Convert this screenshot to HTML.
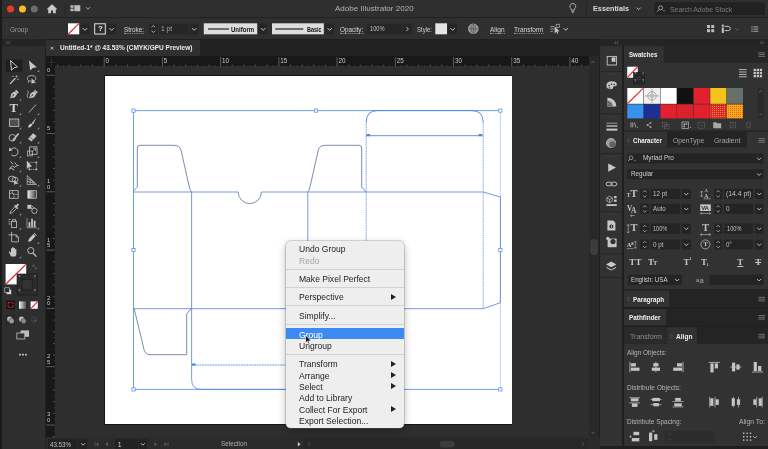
<!DOCTYPE html><html><head><meta charset="utf-8"><title>Adobe Illustrator 2020</title><style>
*{box-sizing:border-box;margin:0;padding:0}
html,body{width:768px;height:449px;overflow:hidden;background:#2f2f2f;}
body{position:relative;font-family:"Liberation Sans",sans-serif;font-size:6.5px;color:#d6d6d6;-webkit-font-smoothing:antialiased}
.a{position:absolute}
.t{position:absolute;white-space:nowrap;line-height:1;transform-origin:0 50%}
.u{border-bottom:1px dotted #9a9a9a}
svg{position:absolute;left:0;top:0;overflow:visible}
.f{position:absolute;background:#242424;border-radius:1.5px}
.mi{position:absolute;left:12.8px;white-space:nowrap;line-height:1;font-size:8.55px;color:#222;letter-spacing:0px}
.sep{position:absolute;left:0;right:0;height:1px;background:#d2d2d2}
.arr{position:absolute;left:105.2px;width:0;height:0;border-left:5px solid #222;border-top:3px solid transparent;border-bottom:3px solid transparent}
</style></head><body><div id="app" style="position:absolute;left:0;top:0;width:768px;height:449px;will-change:transform">
<div class="a" style="left:0px;top:0px;width:768px;height:17.2px;background:#2f2f2f;"></div>
<div class="a" style="left:0px;top:16.8px;width:768px;height:1.4px;background:#212121;"></div>
<div class="a" style="left:0px;top:18.2px;width:768px;height:20.4px;background:#2f2f2f;"></div>
<div class="a" style="left:0px;top:38.5px;width:768px;height:2px;background:#1e1e1e;"></div>
<div class="a" style="left:0px;top:0px;width:1.8px;height:449px;background:#1a1a1a;"></div>
<div class="a" style="left:46px;top:40.4px;width:554px;height:16px;background:#212121;"></div>
<div class="a" style="left:46px;top:40.4px;width:154px;height:16px;background:#303030;"></div>
<div class="a" style="left:46px;top:56.3px;width:554px;height:381px;background:#2e2e2e;"></div>
<div class="a" style="left:46px;top:56.3px;width:543px;height:10.2px;background:#181818;"></div>
<div class="a" style="left:45.6px;top:56.3px;width:9.4px;height:381.4px;background:#181818;"></div>
<div class="a" style="left:588.5px;top:56.3px;width:11.5px;height:381px;background:#282828;"></div>
<div class="a" style="left:589.5px;top:239px;width:8px;height:16px;background:#3c3c3c;border-radius:4px"></div>
<div class="a" style="left:46px;top:437.3px;width:554px;height:12px;background:#2b2b2b;"></div>
<div class="a" style="left:104px;top:75px;width:408.3px;height:350px;background:#161616;"></div>
<div class="a" style="left:104.9px;top:75.9px;width:407px;height:348.2px;background:#ffffff;"></div>
<svg width="768" height="449"><path d="M500.4 110.6 H133.5 V389.4 H500.4" fill="none" stroke="#4a86e6" stroke-width="0.8" /><path d="M500.4 110.6 V389.4" fill="none" stroke="#7fa6ea" stroke-width="0.8" stroke-dasharray="1.2 0.8"/><path d="M261.4 192 H483.2 L500.4 197 V302.7 L483.2 308.7 H133.5" fill="none" stroke="#5f86d2" stroke-width="0.85" /><path d="M133.5 192 H238.2" fill="none" stroke="#5f86d2" stroke-width="0.85" /><path d="M191.6 192 V308.7" fill="none" stroke="#5f86d2" stroke-width="0.85" /><path d="M307.8 192 V308.7" fill="none" stroke="#5f86d2" stroke-width="0.85" /><path d="M366.2 192 V308.7" fill="none" stroke="#6f94dc" stroke-width="0.9" stroke-dasharray="1.5 0.7"/><path d="M133.5 191 L137.3 187 V148 Q137.3 145.3 140 145.3 H173.5 Q179.6 145.3 181 150 L189.3 187 Q190.3 191 191.6 192" fill="none" stroke="#6f7fa8" stroke-width="0.9" /><path d="M238.2 192 A11.6 11.6 0 0 0 261.4 192" fill="none" stroke="#6f7fa8" stroke-width="0.9" /><path d="M307.8 192 Q309 191 310 187 L318.3 150 Q319.6 145.3 325.4 145.3 H359 Q361.7 145.3 361.7 148 V187 L366.2 192" fill="none" stroke="#6f7fa8" stroke-width="0.9" /><path d="M366.2 122.5 Q366.2 110.6 377.5 110.6 H472 Q483.2 110.6 483.2 122.5" fill="none" stroke="#4a86e6" stroke-width="0.95" /><path d="M366.2 135.7 H483.2" fill="none" stroke="#5f86d2" stroke-width="0.9" /><path d="M366.2 192 V122.5" fill="none" stroke="#6f94dc" stroke-width="0.9" stroke-dasharray="1.5 0.7"/><path d="M483.2 122.5 V308.7" fill="none" stroke="#7d9fe2" stroke-width="0.9" stroke-dasharray="1.5 0.7"/><path d="M134.2 308.7 L144 349.5 Q145.5 354.7 150 354.7 H186.7 V314 L191.1 308.7" fill="none" stroke="#6f7fa8" stroke-width="0.9" /><path d="M191.6 308.7 V379.3 Q191.6 389.4 201.7 389.4 H300" fill="none" stroke="#4a86e6" stroke-width="0.8" /><path d="M191.6 365 H300" fill="none" stroke="#4a86e6" stroke-width="0.8" stroke-dasharray="2 0.6"/><rect x="366.7" y="134" width="3.4" height="2.2" fill="#4a86e6"/><rect x="478.7" y="134" width="3.4" height="2.2" fill="#4a86e6"/><rect x="192.1" y="363.4" width="3.4" height="2.2" fill="#4a86e6"/><rect x="131.9" y="109.0" width="3.2" height="3.2" fill="#fff" stroke="#4a86e6" stroke-width="0.7"/><rect x="314.4" y="109.0" width="3.2" height="3.2" fill="#fff" stroke="#4a86e6" stroke-width="0.7"/><rect x="498.79999999999995" y="109.0" width="3.2" height="3.2" fill="#fff" stroke="#4a86e6" stroke-width="0.7"/><rect x="131.9" y="248.4" width="3.2" height="3.2" fill="#fff" stroke="#4a86e6" stroke-width="0.7"/><rect x="498.79999999999995" y="248.4" width="3.2" height="3.2" fill="#fff" stroke="#4a86e6" stroke-width="0.7"/><rect x="131.9" y="387.79999999999995" width="3.2" height="3.2" fill="#fff" stroke="#4a86e6" stroke-width="0.7"/><rect x="498.79999999999995" y="387.79999999999995" width="3.2" height="3.2" fill="#fff" stroke="#4a86e6" stroke-width="0.7"/></svg>
<svg width="768" height="449"><path d="M57.62 64.6 V66.5" stroke="#8a8a8a" stroke-width="0.5"/><path d="M63.45 65.5 V66.5" stroke="#6a6a6a" stroke-width="0.5"/><path d="M69.27 64.6 V66.5" stroke="#8a8a8a" stroke-width="0.5"/><path d="M75.09 65.5 V66.5" stroke="#6a6a6a" stroke-width="0.5"/><path d="M80.91 64.6 V66.5" stroke="#8a8a8a" stroke-width="0.5"/><path d="M86.73 65.5 V66.5" stroke="#6a6a6a" stroke-width="0.5"/><path d="M92.56 64.6 V66.5" stroke="#8a8a8a" stroke-width="0.5"/><path d="M98.38 65.5 V66.5" stroke="#6a6a6a" stroke-width="0.5"/><path d="M104.20 57 V66.5" stroke="#8a8a8a" stroke-width="0.6"/><text x="105.60" y="63" font-size="6.3" fill="#c8c8c8" font-family="Liberation Sans, sans-serif">0</text><path d="M110.02 65.5 V66.5" stroke="#6a6a6a" stroke-width="0.5"/><path d="M115.84 64.6 V66.5" stroke="#8a8a8a" stroke-width="0.5"/><path d="M121.67 65.5 V66.5" stroke="#6a6a6a" stroke-width="0.5"/><path d="M127.49 64.6 V66.5" stroke="#8a8a8a" stroke-width="0.5"/><path d="M133.31 65.5 V66.5" stroke="#6a6a6a" stroke-width="0.5"/><path d="M139.13 64.6 V66.5" stroke="#8a8a8a" stroke-width="0.5"/><path d="M144.95 65.5 V66.5" stroke="#6a6a6a" stroke-width="0.5"/><path d="M150.78 64.6 V66.5" stroke="#8a8a8a" stroke-width="0.5"/><path d="M156.60 65.5 V66.5" stroke="#6a6a6a" stroke-width="0.5"/><path d="M162.42 57 V66.5" stroke="#8a8a8a" stroke-width="0.6"/><text x="163.82" y="63" font-size="6.3" fill="#c8c8c8" font-family="Liberation Sans, sans-serif">5</text><path d="M168.24 65.5 V66.5" stroke="#6a6a6a" stroke-width="0.5"/><path d="M174.06 64.6 V66.5" stroke="#8a8a8a" stroke-width="0.5"/><path d="M179.89 65.5 V66.5" stroke="#6a6a6a" stroke-width="0.5"/><path d="M185.71 64.6 V66.5" stroke="#8a8a8a" stroke-width="0.5"/><path d="M191.53 65.5 V66.5" stroke="#6a6a6a" stroke-width="0.5"/><path d="M197.35 64.6 V66.5" stroke="#8a8a8a" stroke-width="0.5"/><path d="M203.17 65.5 V66.5" stroke="#6a6a6a" stroke-width="0.5"/><path d="M209.00 64.6 V66.5" stroke="#8a8a8a" stroke-width="0.5"/><path d="M214.82 65.5 V66.5" stroke="#6a6a6a" stroke-width="0.5"/><path d="M220.64 57 V66.5" stroke="#8a8a8a" stroke-width="0.6"/><text x="222.04" y="63" font-size="6.3" fill="#c8c8c8" font-family="Liberation Sans, sans-serif">10</text><path d="M226.46 65.5 V66.5" stroke="#6a6a6a" stroke-width="0.5"/><path d="M232.28 64.6 V66.5" stroke="#8a8a8a" stroke-width="0.5"/><path d="M238.11 65.5 V66.5" stroke="#6a6a6a" stroke-width="0.5"/><path d="M243.93 64.6 V66.5" stroke="#8a8a8a" stroke-width="0.5"/><path d="M249.75 65.5 V66.5" stroke="#6a6a6a" stroke-width="0.5"/><path d="M255.57 64.6 V66.5" stroke="#8a8a8a" stroke-width="0.5"/><path d="M261.39 65.5 V66.5" stroke="#6a6a6a" stroke-width="0.5"/><path d="M267.22 64.6 V66.5" stroke="#8a8a8a" stroke-width="0.5"/><path d="M273.04 65.5 V66.5" stroke="#6a6a6a" stroke-width="0.5"/><path d="M278.86 57 V66.5" stroke="#8a8a8a" stroke-width="0.6"/><text x="280.26" y="63" font-size="6.3" fill="#c8c8c8" font-family="Liberation Sans, sans-serif">15</text><path d="M284.68 65.5 V66.5" stroke="#6a6a6a" stroke-width="0.5"/><path d="M290.50 64.6 V66.5" stroke="#8a8a8a" stroke-width="0.5"/><path d="M296.33 65.5 V66.5" stroke="#6a6a6a" stroke-width="0.5"/><path d="M302.15 64.6 V66.5" stroke="#8a8a8a" stroke-width="0.5"/><path d="M307.97 65.5 V66.5" stroke="#6a6a6a" stroke-width="0.5"/><path d="M313.79 64.6 V66.5" stroke="#8a8a8a" stroke-width="0.5"/><path d="M319.61 65.5 V66.5" stroke="#6a6a6a" stroke-width="0.5"/><path d="M325.44 64.6 V66.5" stroke="#8a8a8a" stroke-width="0.5"/><path d="M331.26 65.5 V66.5" stroke="#6a6a6a" stroke-width="0.5"/><path d="M337.08 57 V66.5" stroke="#8a8a8a" stroke-width="0.6"/><text x="338.48" y="63" font-size="6.3" fill="#c8c8c8" font-family="Liberation Sans, sans-serif">20</text><path d="M342.90 65.5 V66.5" stroke="#6a6a6a" stroke-width="0.5"/><path d="M348.72 64.6 V66.5" stroke="#8a8a8a" stroke-width="0.5"/><path d="M354.55 65.5 V66.5" stroke="#6a6a6a" stroke-width="0.5"/><path d="M360.37 64.6 V66.5" stroke="#8a8a8a" stroke-width="0.5"/><path d="M366.19 65.5 V66.5" stroke="#6a6a6a" stroke-width="0.5"/><path d="M372.01 64.6 V66.5" stroke="#8a8a8a" stroke-width="0.5"/><path d="M377.83 65.5 V66.5" stroke="#6a6a6a" stroke-width="0.5"/><path d="M383.66 64.6 V66.5" stroke="#8a8a8a" stroke-width="0.5"/><path d="M389.48 65.5 V66.5" stroke="#6a6a6a" stroke-width="0.5"/><path d="M395.30 57 V66.5" stroke="#8a8a8a" stroke-width="0.6"/><text x="396.70" y="63" font-size="6.3" fill="#c8c8c8" font-family="Liberation Sans, sans-serif">25</text><path d="M401.12 65.5 V66.5" stroke="#6a6a6a" stroke-width="0.5"/><path d="M406.94 64.6 V66.5" stroke="#8a8a8a" stroke-width="0.5"/><path d="M412.77 65.5 V66.5" stroke="#6a6a6a" stroke-width="0.5"/><path d="M418.59 64.6 V66.5" stroke="#8a8a8a" stroke-width="0.5"/><path d="M424.41 65.5 V66.5" stroke="#6a6a6a" stroke-width="0.5"/><path d="M430.23 64.6 V66.5" stroke="#8a8a8a" stroke-width="0.5"/><path d="M436.05 65.5 V66.5" stroke="#6a6a6a" stroke-width="0.5"/><path d="M441.88 64.6 V66.5" stroke="#8a8a8a" stroke-width="0.5"/><path d="M447.70 65.5 V66.5" stroke="#6a6a6a" stroke-width="0.5"/><path d="M453.52 57 V66.5" stroke="#8a8a8a" stroke-width="0.6"/><text x="454.92" y="63" font-size="6.3" fill="#c8c8c8" font-family="Liberation Sans, sans-serif">30</text><path d="M459.34 65.5 V66.5" stroke="#6a6a6a" stroke-width="0.5"/><path d="M465.16 64.6 V66.5" stroke="#8a8a8a" stroke-width="0.5"/><path d="M470.99 65.5 V66.5" stroke="#6a6a6a" stroke-width="0.5"/><path d="M476.81 64.6 V66.5" stroke="#8a8a8a" stroke-width="0.5"/><path d="M482.63 65.5 V66.5" stroke="#6a6a6a" stroke-width="0.5"/><path d="M488.45 64.6 V66.5" stroke="#8a8a8a" stroke-width="0.5"/><path d="M494.27 65.5 V66.5" stroke="#6a6a6a" stroke-width="0.5"/><path d="M500.10 64.6 V66.5" stroke="#8a8a8a" stroke-width="0.5"/><path d="M505.92 65.5 V66.5" stroke="#6a6a6a" stroke-width="0.5"/><path d="M511.74 57 V66.5" stroke="#8a8a8a" stroke-width="0.6"/><text x="513.14" y="63" font-size="6.3" fill="#c8c8c8" font-family="Liberation Sans, sans-serif">35</text><path d="M517.56 65.5 V66.5" stroke="#6a6a6a" stroke-width="0.5"/><path d="M523.38 64.6 V66.5" stroke="#8a8a8a" stroke-width="0.5"/><path d="M529.21 65.5 V66.5" stroke="#6a6a6a" stroke-width="0.5"/><path d="M535.03 64.6 V66.5" stroke="#8a8a8a" stroke-width="0.5"/><path d="M540.85 65.5 V66.5" stroke="#6a6a6a" stroke-width="0.5"/><path d="M546.67 64.6 V66.5" stroke="#8a8a8a" stroke-width="0.5"/><path d="M552.49 65.5 V66.5" stroke="#6a6a6a" stroke-width="0.5"/><path d="M558.32 64.6 V66.5" stroke="#8a8a8a" stroke-width="0.5"/><path d="M564.14 65.5 V66.5" stroke="#6a6a6a" stroke-width="0.5"/><path d="M569.96 57 V66.5" stroke="#8a8a8a" stroke-width="0.6"/><text x="571.36" y="63" font-size="6.3" fill="#c8c8c8" font-family="Liberation Sans, sans-serif">40</text><path d="M575.78 65.5 V66.5" stroke="#6a6a6a" stroke-width="0.5"/><path d="M581.60 64.6 V66.5" stroke="#8a8a8a" stroke-width="0.5"/><path d="M587.43 65.5 V66.5" stroke="#6a6a6a" stroke-width="0.5"/><path d="M53.9 69.37 H54.8" stroke="#6a6a6a" stroke-width="0.5"/><path d="M46.5 75.20 H54.8" stroke="#8a8a8a" stroke-width="0.6"/><text x="46.9" y="72.00" font-size="5.9" fill="#c8c8c8" font-family="Liberation Sans, sans-serif">0</text><path d="M53.9 81.03 H54.8" stroke="#6a6a6a" stroke-width="0.5"/><path d="M53 86.86 H54.8" stroke="#8a8a8a" stroke-width="0.5"/><path d="M53.9 92.69 H54.8" stroke="#6a6a6a" stroke-width="0.5"/><path d="M53 98.52 H54.8" stroke="#8a8a8a" stroke-width="0.5"/><path d="M53.9 104.35 H54.8" stroke="#6a6a6a" stroke-width="0.5"/><path d="M53 110.18 H54.8" stroke="#8a8a8a" stroke-width="0.5"/><path d="M53.9 116.01 H54.8" stroke="#6a6a6a" stroke-width="0.5"/><path d="M53 121.84 H54.8" stroke="#8a8a8a" stroke-width="0.5"/><path d="M53.9 127.67 H54.8" stroke="#6a6a6a" stroke-width="0.5"/><path d="M46.5 133.50 H54.8" stroke="#8a8a8a" stroke-width="0.6"/><text x="46.9" y="130.30" font-size="5.9" fill="#c8c8c8" font-family="Liberation Sans, sans-serif">5</text><path d="M53.9 139.33 H54.8" stroke="#6a6a6a" stroke-width="0.5"/><path d="M53 145.16 H54.8" stroke="#8a8a8a" stroke-width="0.5"/><path d="M53.9 150.99 H54.8" stroke="#6a6a6a" stroke-width="0.5"/><path d="M53 156.82 H54.8" stroke="#8a8a8a" stroke-width="0.5"/><path d="M53.9 162.65 H54.8" stroke="#6a6a6a" stroke-width="0.5"/><path d="M53 168.48 H54.8" stroke="#8a8a8a" stroke-width="0.5"/><path d="M53.9 174.31 H54.8" stroke="#6a6a6a" stroke-width="0.5"/><path d="M53 180.14 H54.8" stroke="#8a8a8a" stroke-width="0.5"/><path d="M53.9 185.97 H54.8" stroke="#6a6a6a" stroke-width="0.5"/><path d="M46.5 191.80 H54.8" stroke="#8a8a8a" stroke-width="0.6"/><text x="46.9" y="183.20" font-size="5.9" fill="#c8c8c8" font-family="Liberation Sans, sans-serif">1</text><text x="46.9" y="188.60" font-size="5.9" fill="#c8c8c8" font-family="Liberation Sans, sans-serif">0</text><path d="M53.9 197.63 H54.8" stroke="#6a6a6a" stroke-width="0.5"/><path d="M53 203.46 H54.8" stroke="#8a8a8a" stroke-width="0.5"/><path d="M53.9 209.29 H54.8" stroke="#6a6a6a" stroke-width="0.5"/><path d="M53 215.12 H54.8" stroke="#8a8a8a" stroke-width="0.5"/><path d="M53.9 220.95 H54.8" stroke="#6a6a6a" stroke-width="0.5"/><path d="M53 226.78 H54.8" stroke="#8a8a8a" stroke-width="0.5"/><path d="M53.9 232.61 H54.8" stroke="#6a6a6a" stroke-width="0.5"/><path d="M53 238.44 H54.8" stroke="#8a8a8a" stroke-width="0.5"/><path d="M53.9 244.27 H54.8" stroke="#6a6a6a" stroke-width="0.5"/><path d="M46.5 250.10 H54.8" stroke="#8a8a8a" stroke-width="0.6"/><text x="46.9" y="241.50" font-size="5.9" fill="#c8c8c8" font-family="Liberation Sans, sans-serif">1</text><text x="46.9" y="246.90" font-size="5.9" fill="#c8c8c8" font-family="Liberation Sans, sans-serif">5</text><path d="M53.9 255.93 H54.8" stroke="#6a6a6a" stroke-width="0.5"/><path d="M53 261.76 H54.8" stroke="#8a8a8a" stroke-width="0.5"/><path d="M53.9 267.59 H54.8" stroke="#6a6a6a" stroke-width="0.5"/><path d="M53 273.42 H54.8" stroke="#8a8a8a" stroke-width="0.5"/><path d="M53.9 279.25 H54.8" stroke="#6a6a6a" stroke-width="0.5"/><path d="M53 285.08 H54.8" stroke="#8a8a8a" stroke-width="0.5"/><path d="M53.9 290.91 H54.8" stroke="#6a6a6a" stroke-width="0.5"/><path d="M53 296.74 H54.8" stroke="#8a8a8a" stroke-width="0.5"/><path d="M53.9 302.57 H54.8" stroke="#6a6a6a" stroke-width="0.5"/><path d="M46.5 308.40 H54.8" stroke="#8a8a8a" stroke-width="0.6"/><text x="46.9" y="299.80" font-size="5.9" fill="#c8c8c8" font-family="Liberation Sans, sans-serif">2</text><text x="46.9" y="305.20" font-size="5.9" fill="#c8c8c8" font-family="Liberation Sans, sans-serif">0</text><path d="M53.9 314.23 H54.8" stroke="#6a6a6a" stroke-width="0.5"/><path d="M53 320.06 H54.8" stroke="#8a8a8a" stroke-width="0.5"/><path d="M53.9 325.89 H54.8" stroke="#6a6a6a" stroke-width="0.5"/><path d="M53 331.72 H54.8" stroke="#8a8a8a" stroke-width="0.5"/><path d="M53.9 337.55 H54.8" stroke="#6a6a6a" stroke-width="0.5"/><path d="M53 343.38 H54.8" stroke="#8a8a8a" stroke-width="0.5"/><path d="M53.9 349.21 H54.8" stroke="#6a6a6a" stroke-width="0.5"/><path d="M53 355.04 H54.8" stroke="#8a8a8a" stroke-width="0.5"/><path d="M53.9 360.87 H54.8" stroke="#6a6a6a" stroke-width="0.5"/><path d="M46.5 366.70 H54.8" stroke="#8a8a8a" stroke-width="0.6"/><text x="46.9" y="358.10" font-size="5.9" fill="#c8c8c8" font-family="Liberation Sans, sans-serif">2</text><text x="46.9" y="363.50" font-size="5.9" fill="#c8c8c8" font-family="Liberation Sans, sans-serif">5</text><path d="M53.9 372.53 H54.8" stroke="#6a6a6a" stroke-width="0.5"/><path d="M53 378.36 H54.8" stroke="#8a8a8a" stroke-width="0.5"/><path d="M53.9 384.19 H54.8" stroke="#6a6a6a" stroke-width="0.5"/><path d="M53 390.02 H54.8" stroke="#8a8a8a" stroke-width="0.5"/><path d="M53.9 395.85 H54.8" stroke="#6a6a6a" stroke-width="0.5"/><path d="M53 401.68 H54.8" stroke="#8a8a8a" stroke-width="0.5"/><path d="M53.9 407.51 H54.8" stroke="#6a6a6a" stroke-width="0.5"/><path d="M53 413.34 H54.8" stroke="#8a8a8a" stroke-width="0.5"/><path d="M53.9 419.17 H54.8" stroke="#6a6a6a" stroke-width="0.5"/><path d="M46.5 425.00 H54.8" stroke="#8a8a8a" stroke-width="0.6"/><text x="46.9" y="416.40" font-size="5.9" fill="#c8c8c8" font-family="Liberation Sans, sans-serif">3</text><text x="46.9" y="421.80" font-size="5.9" fill="#c8c8c8" font-family="Liberation Sans, sans-serif">0</text><path d="M53.9 430.83 H54.8" stroke="#6a6a6a" stroke-width="0.5"/><path d="M53 436.66 H54.8" stroke="#8a8a8a" stroke-width="0.5"/><rect x="45.6" y="56.3" width="9.4" height="10.2" fill="#181818"/><path d="M47.5 62.3 H54.8 M51.6 57.5 V66.5" stroke="#6e6e6e" stroke-width="0.5" stroke-dasharray="0.8 0.8"/></svg>
<svg width="768" height="449"><circle cx="10.5" cy="9.1" r="3.5" fill="#e8392c"/><circle cx="22.5" cy="9.1" r="3.5" fill="#f5bf1f"/><circle cx="34.3" cy="9.1" r="3.5" fill="#66706a"/><path d="M52 4.2 L46.6 9.3 H48.2 V13.2 H51 V10.4 H53 V13.2 H55.8 V9.3 H57.4 Z" fill="#c9c9c9"/><rect x="64.6" y="3" width="0.8" height="12" fill="#262626"/><rect x="70.5" y="5.2" width="3" height="2.6" fill="#bdbdbd"/><rect x="70.5" y="8.6" width="3" height="2.6" fill="#bdbdbd"/><rect x="74.3" y="5.2" width="6" height="6" fill="#bdbdbd"/><path d="M86 7.2 L88 9.2 L90 7.2" fill="none" stroke="#bdbdbd" stroke-width="0.9"/><path d="M572.8 3.4 a3 3 0 0 1 1.6 5.5 v1.2 h-3.2 v-1.2 a3 3 0 0 1 1.6 -5.5 Z M571.5 11.3 h2.6 M571.9 12.6 h1.8" fill="none" stroke="#c4c4c4" stroke-width="0.8"/><rect x="586" y="2.5" width="0.8" height="12.5" fill="#222"/><path d="M636.5 7.6 L638.6 9.7 L640.7 7.6" fill="none" stroke="#c4c4c4" stroke-width="0.9"/><rect x="654.3" y="2.3" width="110.7" height="12.6" rx="2" fill="#222222"/><circle cx="660.6" cy="7.8" r="2" fill="none" stroke="#b8b8b8" stroke-width="0.8"/><path d="M659.2 9.4 L657.2 11.6" stroke="#b8b8b8" stroke-width="0.9"/><path d="M663 10.2 l1 1 l1 -1" fill="none" stroke="#b8b8b8" stroke-width="0.6"/></svg>
<div class="t " style="left:335px;top:5.20px;font-size:7.6px;color:#b4b4b4;font-weight:normal;transform:scaleX(1.058);">Adobe Illustrator 2020</div>
<div class="t " style="left:593px;top:5.05px;font-size:7.5px;color:#dcdcdc;font-weight:bold;transform:scaleX(0.970);">Essentials</div>
<div class="t " style="left:669.8px;top:5.50px;font-size:7.4px;color:#7e7e7e;font-weight:normal;transform:scaleX(0.928);">Search Adobe Stock</div>
<svg width="768" height="449"><path d="M6.7 22 V36" stroke="#444" stroke-width="1" stroke-dasharray="0.8 0.8"/><rect x="68" y="23.3" width="11.2" height="11" fill="#fff"/><path d="M68.4 34 L78.8 23.6" stroke="#e0262a" stroke-width="1.2"/><rect x="80.5" y="23.5" width="8.7" height="10.7" fill="#262626"/><rect x="94.7" y="23.8" width="10.6" height="10.2" fill="#2a2a2a" stroke="#e4e4e4" stroke-width="1"/><rect x="107.5" y="23.5" width="8.3" height="10.7" fill="#262626"/><rect x="149.2" y="23.6" width="8.6" height="10.6" fill="#262626"/><rect x="159.2" y="23.6" width="29.2" height="10.6" fill="#262626"/><rect x="190" y="23.6" width="8.4" height="10.6" fill="#262626"/><path d="M151.6 27.4 L153.4 25.4 L155.2 27.4 M151.6 30.6 L153.4 32.6 L155.2 30.6" fill="none" stroke="#c0c0c0" stroke-width="0.8"/><rect x="203.8" y="23.3" width="53.4" height="11" fill="#dedede"/><path d="M208 29 H229" stroke="#111" stroke-width="1.1"/><rect x="258.8" y="23.5" width="8.7" height="10.7" fill="#262626"/><rect x="272" y="23.3" width="51.8" height="11" fill="#dedede"/><path d="M275.3 29 H303.3" stroke="#111" stroke-width="1.1"/><rect x="325.5" y="23.5" width="8.4" height="10.7" fill="#262626"/><rect x="367" y="23.6" width="34.7" height="10.6" fill="#262626"/><rect x="402.8" y="23.6" width="9.2" height="10.6" fill="#262626"/><path d="M406.4 27 L408.4 29 L406.4 31" fill="none" stroke="#c8c8c8" stroke-width="0.9"/><rect x="435.3" y="23.3" width="11.7" height="11" fill="#e4e4e4"/><rect x="448.3" y="23.5" width="8.7" height="10.7" fill="#262626"/><circle cx="473.3" cy="28.8" r="4.8" fill="#8f8f8f" stroke="#cfcfcf" stroke-width="0.7"/><path d="M473.3 24 V33.6 M468.5 28.8 H478.1" stroke="#444" stroke-width="0.5"/><ellipse cx="473.3" cy="28.8" rx="2.2" ry="4.8" fill="none" stroke="#444" stroke-width="0.5"/><path d="M550.4 26.6 h3.6 M550.4 29 h3.6 M550.4 31.4 h2.4" stroke="#c4c4c4" stroke-width="0.7"/><path d="M554.6 26.6 L554.6 33.4 L556.4 31.8 L557.6 34 L558.4 33.6 L557.4 31.4 L559.6 31.2 Z" fill="#c4c4c4"/><rect x="556.2" y="24.2" width="3.2" height="3.2" fill="none" stroke="#c4c4c4" stroke-width="0.6"/><g fill="#bdbdbd"><rect x="707" y="25" width="3" height="3"/><rect x="711.2" y="25" width="3" height="3"/><rect x="707" y="29.2" width="3" height="3"/><rect x="711.2" y="29.2" width="3" height="3"/></g><rect x="721.8" y="24.6" width="2" height="2" fill="#c4c4c4"/><rect x="721.8" y="27.4" width="2" height="5.6" fill="#c4c4c4"/><path d="M724.6 26.4 h3.6 a2 2 0 0 1 0 4.2 h-3.6" fill="none" stroke="#c4c4c4" stroke-width="1"/><g fill="#8a8a8a"><rect x="751.3" y="26.3" width="1.5" height="1.3"/><rect x="753.4" y="26.3" width="4.9" height="1.3"/><rect x="751.3" y="28.5" width="1.5" height="1.3"/><rect x="753.4" y="28.5" width="4.9" height="1.3"/><rect x="751.3" y="30.7" width="1.5" height="1.3"/><rect x="753.4" y="30.7" width="4.9" height="1.3"/></g></svg>
<div class="t " style="left:10px;top:25.50px;font-size:7px;color:#9c9c9c;font-weight:normal;transform:scaleX(0.925);">Group</div>
<div class="t " style="left:98px;top:25.20px;font-size:8px;color:#f0f0f0;font-weight:bold;">?</div>
<svg width="768" height="449"><path d="M82.7 28.099999999999998 L84.9 30.3 L87.10000000000001 28.099999999999998" fill="none" stroke="#c8c8c8" stroke-width="1"/></svg>
<svg width="768" height="449"><path d="M109.39999999999999 28.099999999999998 L111.6 30.3 L113.8 28.099999999999998" fill="none" stroke="#c8c8c8" stroke-width="1"/></svg>
<div class="t u" style="left:124.2px;top:25.50px;font-size:7px;color:#d8d8d8;font-weight:normal;transform:scaleX(0.902);">Stroke:</div>
<div class="t " style="left:161.3px;top:25.90px;font-size:6.8px;color:#a8a8a8;font-weight:normal;transform:scaleX(0.987);">1 pt</div>
<svg width="768" height="449"><path d="M192.0 28.099999999999998 L194.2 30.3 L196.39999999999998 28.099999999999998" fill="none" stroke="#c8c8c8" stroke-width="1"/></svg>
<div class="t " style="left:230.8px;top:25.60px;font-size:7px;color:#111;font-weight:bold;transform:scaleX(0.865);">Uniform</div>
<svg width="768" height="449"><path d="M261.0 28.099999999999998 L263.2 30.3 L265.4 28.099999999999998" fill="none" stroke="#c8c8c8" stroke-width="1"/></svg>
<div class="t " style="left:306.7px;top:25.60px;font-size:7px;color:#111;font-weight:bold;transform:scaleX(0.776);">Basic</div>
<svg width="768" height="449"><path d="M327.5 28.099999999999998 L329.7 30.3 L331.9 28.099999999999998" fill="none" stroke="#c8c8c8" stroke-width="1"/></svg>
<div class="t u" style="left:339.5px;top:25.50px;font-size:7px;color:#d8d8d8;font-weight:normal;transform:scaleX(0.907);">Opacity:</div>
<div class="t " style="left:369.7px;top:25.90px;font-size:6.8px;color:#c4c4c4;font-weight:normal;transform:scaleX(0.834);">100%</div>
<div class="t " style="left:416.7px;top:25.50px;font-size:7px;color:#c8c8c8;font-weight:normal;transform:scaleX(0.857);">Style:</div>
<svg width="768" height="449"><path d="M450.5 28.099999999999998 L452.7 30.3 L454.9 28.099999999999998" fill="none" stroke="#c8c8c8" stroke-width="1"/></svg>
<div class="t u" style="left:489.7px;top:25.50px;font-size:7px;color:#d8d8d8;font-weight:normal;transform:scaleX(0.932);">Align</div>
<div class="t u" style="left:513.8px;top:25.50px;font-size:7px;color:#d8d8d8;font-weight:normal;transform:scaleX(0.933);">Transform</div>
<svg width="768" height="449"><path d="M563.5999999999999 28.099999999999998 L565.8 30.3 L568.0 28.099999999999998" fill="none" stroke="#c8c8c8" stroke-width="1"/></svg>
<svg width="768" height="449"><path d="M735.0 28.099999999999998 L737.2 30.3 L739.4000000000001 28.099999999999998" fill="none" stroke="#5a5a5a" stroke-width="1"/></svg>
<svg width="768" height="449"><path d="M50.6 46.8 L53.4 49.6 M53.4 46.8 L50.6 49.6" stroke="#d0d0d0" stroke-width="0.8"/></svg>
<div class="t " style="left:60px;top:44.85px;font-size:7.1px;color:#ececec;font-weight:bold;transform:scaleX(0.919);">Untitled-1* @ 43.53% (CMYK/GPU Preview)</div>
<div class="a" style="left:2.2px;top:38.5px;width:43.8px;height:411px;background:#2e2e2e;"></div>
<div class="a" style="left:2.2px;top:38.5px;width:43.8px;height:7.3px;background:#242424;"></div>
<div class="a" style="left:45.3px;top:38.5px;width:0.9px;height:411px;background:#212121;"></div>
<svg width="768" height="449"><path d="M7.6 41.2 L6.2 42.6 L7.6 44 M9.8 41.2 L8.4 42.6 L9.8 44" fill="none" stroke="#8a8a8a" stroke-width="0.6"/><path d="M18 49.5 H30" stroke="#3e3e3e" stroke-width="1.2" stroke-dasharray="0.8 0.8"/><rect x="5.8" y="59.5" width="16.6" height="12.2" fill="#1f1f1f" rx="1"/><path d="M10.5 60.5 L11.5 70.3 L13.9 67.9 L17.4 66.9 Z" fill="none" stroke="#e0e0e0" stroke-width="0.9" stroke-linejoin="round"/><path d="M28.9 60.5 L30.2 70.5 L32.8 68.1 L36.8 67.3 Z" fill="#c6c6c6"/><path d="M39.2 71.9 h-2 l2 -2 Z" fill="#9a9a9a"/><path d="M10 83.83 L15.4 78.23" stroke="#c6c6c6" stroke-width="1.3"/><path d="M16.6 75.23 v2.4 M15.4 76.42999999999999 h2.4 M13 75.83 v1.2 M12.4 76.42999999999999 h1.2 M17.4 79.23 h1.2 M18 78.63 v1.2" stroke="#c6c6c6" stroke-width="0.6"/><ellipse cx="31.6" cy="78.42999999999999" rx="4.2" ry="2.8" fill="none" stroke="#c6c6c6" stroke-width="0.8"/><path d="M28.6 80.42999999999999 q-1.2 1.6 0.4 2.6" fill="none" stroke="#c6c6c6" stroke-width="0.7"/><path d="M31.6 78.23 L31.6 84.23 L33.2 82.83 L36 83.23 Z" fill="#c6c6c6"/><path d="M10 98.56 L11.4 93.56 L15 91.16 L17.4 93.56 L15 97.16 Z" fill="#c6c6c6"/><path d="M15.6 90.36 L18.2 92.96" stroke="#c6c6c6" stroke-width="1.6"/><circle cx="13.4" cy="94.96" r="0.8" fill="#323232"/><path d="M10 98.56 L13.2 95.16" stroke="#323232" stroke-width="0.5"/><path d="M21.2 100.56 h-2 l2 -2 Z" fill="#9a9a9a"/><path d="M29 98.56 L30.4 93.56 L34 91.16 L36.4 93.56 L34 97.16 Z" fill="#c6c6c6"/><path d="M34.6 90.36 L37.2 92.96" stroke="#c6c6c6" stroke-width="1.6"/><circle cx="32.4" cy="94.96" r="0.8" fill="#323232"/><path d="M29 98.56 L32.2 95.16" stroke="#323232" stroke-width="0.5"/><path d="M27.6 90.56 q1.6 2 0 3.6 q-1.4 1.8 0.6 3.6" fill="none" stroke="#c6c6c6" stroke-width="0.7"/><path d="M29 112.49000000000001 L36 104.49000000000001" stroke="#c6c6c6" stroke-width="0.8"/><path d="M39.2 114.89000000000001 h-2 l2 -2 Z" fill="#9a9a9a"/><path d="M21.2 114.89000000000001 h-2 l2 -2 Z" fill="#9a9a9a"/><rect x="9.4" y="119.02" width="9.4" height="7.4" fill="#505050" stroke="#c6c6c6" stroke-width="0.8"/><path d="M21.2 129.22 h-2 l2 -2 Z" fill="#9a9a9a"/><path d="M36.4 117.82 L31.6 123.22 L33 124.41999999999999 Z" fill="#c6c6c6"/><path d="M31.2 123.61999999999999 q-2.8 0.6 -3 4 q3 0.2 4.2 -2.8 Z" fill="#c6c6c6"/><path d="M39.2 129.22 h-2 l2 -2 Z" fill="#9a9a9a"/><circle cx="12.4" cy="137.75" r="3.3" fill="none" stroke="#c6c6c6" stroke-width="0.8"/><path d="M12.6 140.75 L18.6 133.55" stroke="#c6c6c6" stroke-width="1.6"/><path d="M21.2 143.55 h-2 l2 -2 Z" fill="#9a9a9a"/><path d="M28 138.75 L33 133.15 L36.6 135.95000000000002 L31.6 141.55 Z" fill="#c6c6c6"/><path d="M29.6 136.95000000000002 L33.2 139.75" stroke="#323232" stroke-width="0.6"/><path d="M39.2 143.55 h-2 l2 -2 Z" fill="#9a9a9a"/><path d="M10.6 149.88000000000002 A4 4 0 1 1 11.4 154.88000000000002" fill="none" stroke="#c6c6c6" stroke-width="0.9"/><path d="M9.2 147.48000000000002 L12.6 150.28000000000003 L9 151.28000000000003 Z" fill="#c6c6c6"/><path d="M21.2 157.88000000000002 h-2 l2 -2 Z" fill="#9a9a9a"/><rect x="27.6" y="151.08" width="4.8" height="4.8" fill="none" stroke="#c6c6c6" stroke-width="0.7"/><rect x="29.6" y="146.88000000000002" width="7.4" height="7.4" fill="none" stroke="#c6c6c6" stroke-width="0.8"/><path d="M31.6 152.08 L35.4 148.48000000000002 M33 148.28000000000003 h2.6 v2.6" fill="none" stroke="#c6c6c6" stroke-width="0.7"/><path d="M39.2 157.88000000000002 h-2 l2 -2 Z" fill="#9a9a9a"/><path d="M9 169.41 q2 -1.6 3.4 -3.6 q1.6 3 3.4 0.6 q1 -1.2 3 -1" fill="none" stroke="#c6c6c6" stroke-width="0.9"/><path d="M10.6 161.41 l2.4 3 M14.6 162.41 l2 2.4 M10 167.61 l4.4 2.4" stroke="#c6c6c6" stroke-width="0.9"/><path d="M21.2 172.21 h-2 l2 -2 Z" fill="#9a9a9a"/><rect x="29.4" y="162.41" width="7" height="7" fill="none" stroke="#c6c6c6" stroke-width="0.7" stroke-dasharray="1.2 0.8"/><path d="M26.8 160.61 L26.8 169.01 L28.8 167.21 L32 166.61 Z" fill="#c6c6c6"/><g fill="#c6c6c6"><rect x="35.6" y="161.61" width="1.6" height="1.6"/><rect x="35.6" y="168.61" width="1.6" height="1.6"/><rect x="28.6" y="168.61" width="1.6" height="1.6"/></g><ellipse cx="12" cy="178.94" rx="3.6" ry="2.8" fill="none" stroke="#c6c6c6" stroke-width="0.8"/><ellipse cx="15" cy="179.73999999999998" rx="3" ry="2.4" fill="none" stroke="#c6c6c6" stroke-width="0.8"/><path d="M14.2 179.94 L14.2 185.14 L15.8 183.73999999999998 L18.6 183.94 Z" fill="#c6c6c6"/><path d="M21.2 186.54 h-2 l2 -2 Z" fill="#9a9a9a"/><path d="M27.2 184.54 V175.54 L36.6 184.54 Z M27.2 178.54 L33.4 181.54 M27.2 181.54 L35 183.14 M30.2 178.33999999999997 V184.54 M33 181.14 V184.54" fill="none" stroke="#c6c6c6" stroke-width="0.7"/><path d="M39.2 186.54 h-2 l2 -2 Z" fill="#9a9a9a"/><rect x="9.6" y="190.67" width="8.6" height="7.6" fill="none" stroke="#c6c6c6" stroke-width="0.8"/><path d="M9.6 193.87 q2.2 -1.6 4.4 0 t4.2 0 M12.8 190.67 q-1.2 2 0.6 3.8 t-0.4 3.8" fill="none" stroke="#c6c6c6" stroke-width="0.6"/><defs><linearGradient id="gt" x1="0" x2="1"><stop offset="0" stop-color="#eaeaea"/><stop offset="1" stop-color="#3a3a3a"/></linearGradient></defs><rect x="27.8" y="190.67" width="8.6" height="7.6" fill="url(#gt)" stroke="#c6c6c6" stroke-width="0.7"/><path d="M10 213.4 L10.6 211.20000000000002 L15 206.8 L16.6 208.4 L12.2 212.8 Z" fill="none" stroke="#c6c6c6" stroke-width="0.8"/><path d="M14.6 205.20000000000002 L18 208.60000000000002" stroke="#c6c6c6" stroke-width="1.3"/><path d="M16.2 206.60000000000002 L18.4 204.20000000000002" stroke="#c6c6c6" stroke-width="1.8"/><path d="M21.2 215.20000000000002 h-2 l2 -2 Z" fill="#9a9a9a"/><rect x="27.4" y="204.8" width="4" height="4" fill="#c6c6c6"/><circle cx="34.4" cy="210.8" r="2.7" fill="none" stroke="#c6c6c6" stroke-width="0.8"/><path d="M30 207.20000000000002 L32.8 209.4 M31.8 206.0 l2.6 2" stroke="#c6c6c6" stroke-width="0.8"/><rect x="11.6" y="221.53" width="5" height="6" fill="none" stroke="#c6c6c6" stroke-width="0.8"/><path d="M12.6 221.53 v-2 h3 v2 M8.6 219.53 h2 M8.6 221.73 h1.6 M8.6 223.93 h2" fill="none" stroke="#c6c6c6" stroke-width="0.8"/><path d="M21.2 229.53 h-2 l2 -2 Z" fill="#9a9a9a"/><g fill="#c6c6c6"><rect x="28.6" y="222.13" width="1.7" height="5"/><rect x="31.2" y="218.73" width="1.7" height="8.4"/><rect x="33.8" y="220.73" width="1.7" height="6.4"/></g><path d="M27 218.13 V227.73 H37" fill="none" stroke="#c6c6c6" stroke-width="0.6"/><path d="M39.2 229.53 h-2 l2 -2 Z" fill="#9a9a9a"/><path d="M11.6 231.86 V241.86 H18.4 V237.06 L16.2 234.86 H8.4 M16.2 234.86 V237.06 H18.4" fill="none" stroke="#c6c6c6" stroke-width="0.8"/><path d="M28 242.06 L29 238.86 L33.4 234.06 L35.6 236.06 L31.2 241.06 Z" fill="#c6c6c6"/><path d="M34 233.06 L36.6 235.46" stroke="#c6c6c6" stroke-width="1"/><path d="M39.2 243.86 h-2 l2 -2 Z" fill="#9a9a9a"/><path d="M11 256.39 L9 252.39 Q8.6 250.98999999999998 10 251.59 L11 252.79 V248.39 Q11.6 247.39 12.2 248.39 V247.59 Q13 246.59 13.6 247.59 V248.19 Q14.4 247.19 15 248.19 V249.39 Q15.8 248.39 16.4 249.39 V253.79 Q16.4 255.39 15.4 256.39 Z" fill="#c6c6c6"/><path d="M21.2 258.19 h-2 l2 -2 Z" fill="#9a9a9a"/><circle cx="30.8" cy="250.59" r="3.1" fill="none" stroke="#c6c6c6" stroke-width="0.9"/><path d="M33 252.98999999999998 L36.4 256.59" stroke="#c6c6c6" stroke-width="1.3"/><rect x="5.6" y="264" width="20.6" height="20.4" fill="#fff"/><path d="M6 284 L25.8 264.4" stroke="#e0262a" stroke-width="1.3"/><rect x="17" y="274" width="20.6" height="21" fill="#2a2a2a" stroke="#1a1a1a" stroke-width="0.6"/><rect x="22.2" y="279.4" width="10" height="10.4" fill="#323232" stroke="#1a1a1a" stroke-width="0.6"/><path d="M32.4 265.6 q3.4 -0.2 3.6 3.6 M32.4 265.6 l1.4 -1.2 M32.4 265.6 l1.4 1.2 M36 269.2 l-1.2 -1.2 M36 269.2 l1.2 -1.2" fill="none" stroke="#6c6c6c" stroke-width="0.6"/><rect x="6.6" y="289.6" width="4.6" height="4.6" fill="#dcdcdc" stroke="#444" stroke-width="0.4"/><rect x="4.8" y="287.8" width="4.6" height="4.6" fill="#2a2a2a" stroke="#cfcfcf" stroke-width="0.6"/><rect x="6.6" y="300.6" width="8" height="8.6" fill="#111"/><rect x="8.2" y="302.4" width="4.8" height="5" fill="none" stroke="#e0262a" stroke-width="1" stroke-dasharray="1.7 0.8"/><defs><linearGradient id="g2" x1="0" x2="1"><stop offset="0" stop-color="#f4f4f4"/><stop offset="1" stop-color="#555"/></linearGradient></defs><rect x="19" y="301.4" width="7" height="7.4" fill="url(#g2)"/><rect x="30.6" y="301.4" width="7.2" height="7.4" fill="#fff"/><path d="M30.8 308.6 L37.6 301.6" stroke="#e0262a" stroke-width="1.1"/><circle cx="9.6" cy="319" r="2.5" fill="#bdbdbd"/><circle cx="11.6" cy="321" r="2.7" fill="#9a9a9a" stroke="#323232" stroke-width="0.5"/><rect x="6" y="315.6" width="8.6" height="8.6" fill="none" stroke="#1f1f1f" stroke-width="0.6"/><circle cx="21.6" cy="319" r="2.6" fill="#bdbdbd"/><circle cx="23.6" cy="321" r="2.6" fill="#8a8a8a" stroke="#323232" stroke-width="0.5"/><circle cx="34.2" cy="319.6" r="2.6" fill="none" stroke="#4c4c4c" stroke-width="0.7"/><circle cx="35.4" cy="320.6" r="1.4" fill="#4c4c4c"/><rect x="20.6" y="330.4" width="8.4" height="6.4" fill="#bdbdbd"/><rect x="16.8" y="333" width="8" height="6" fill="#323232" stroke="#bdbdbd" stroke-width="0.8"/><g fill="#cfcfcf"><rect x="19.2" y="353.8" width="1.7" height="1.7"/><rect x="22.1" y="353.8" width="1.7" height="1.7"/><rect x="25" y="353.8" width="1.7" height="1.7"/></g></svg>
<div class="t" style="left:9.6px;top:102.29px;font-family:'Liberation Serif',serif;font-size:12.5px;color:#d6d6d6;font-weight:bold">T</div>
<div class="t" style="left:18px;top:275.40000000000003px;font-size:4.4px;color:#c8c8c8">?</div>
<div class="t" style="left:33.6px;top:275.40000000000003px;font-size:4.4px;color:#c8c8c8">?</div>
<div class="t" style="left:18px;top:289.40000000000003px;font-size:4.4px;color:#c8c8c8">?</div>
<div class="t" style="left:33.6px;top:289.40000000000003px;font-size:4.4px;color:#c8c8c8">?</div>
<div class="a" style="left:600px;top:38.8px;width:168px;height:411px;background:#323232;"></div>
<div class="a" style="left:600px;top:38.8px;width:168px;height:7.4px;background:#242424;"></div>
<div class="a" style="left:622.4px;top:46px;width:1.4px;height:409px;background:#1f1f1f;"></div>
<div class="a" style="left:599.4px;top:38.8px;width:0.9px;height:411px;background:#1f1f1f;"></div>
<svg width="768" height="449"><path d="M616 41.3 L614.6 42.7 L616 44.1 M618.2 41.3 L616.8 42.7 L618.2 44.1" fill="none" stroke="#8a8a8a" stroke-width="0.6"/><path d="M760.2 41.3 L761.6 42.7 L760.2 44.1 M762.4 41.3 L763.8 42.7 L762.4 44.1" fill="none" stroke="#8a8a8a" stroke-width="0.6"/><path d="M606 49.5 H617" stroke="#444" stroke-width="1" stroke-dasharray="0.8 0.8"/><rect x="607.2" y="56.4" width="9.2" height="8.6" fill="none" stroke="#c6c6c6" stroke-width="0.9"/><rect x="611.6" y="57.4" width="3.8" height="4.4" fill="#c6c6c6"/><rect x="600.4" y="71" width="22.6" height="0.8" fill="#242424"/><path d="M606 74.5 H617" stroke="#444" stroke-width="1" stroke-dasharray="0.8 0.8"/><path transform="translate(0 -1.2)" d="M606.4 86.6 q0 -4 5.4 -4.2 q5 0 5 3.2 q0 2 -2.4 1.8 q-1.6 0 -1.2 1.4 q0.2 1.6 -2.4 1.6 q-4.4 0 -4.4 -3.8 Z" fill="#c6c6c6"/><g fill="#323232"><circle cx="609" cy="85.6" r="0.8"/><circle cx="611.4" cy="84.2" r="0.8"/><circle cx="614.2" cy="84.6" r="0.8"/><circle cx="609.6" cy="88" r="0.8"/></g><path d="M607.4 106.4 V97.4 Q616 98.4 616.4 106.4 Z" fill="#c6c6c6"/><path d="M607.4 106.4 V100.6 Q612.4 101.4 612.8 106.4 Z" fill="#6e6e6e"/><rect x="600.4" y="113.4" width="22.6" height="0.8" fill="#242424"/><path d="M606 117 H617" stroke="#444" stroke-width="1" stroke-dasharray="0.8 0.8"/><path d="M606.4 123.2 H617.4" stroke="#c6c6c6" stroke-width="0.7"/><path d="M606.4 126 H617.4" stroke="#c6c6c6" stroke-width="1.3"/><path d="M606.4 129.6 H617.4" stroke="#c6c6c6" stroke-width="2"/><circle cx="611" cy="143" r="4.6" fill="#9a9a9a" stroke="#c6c6c6" stroke-width="0.7"/><circle cx="612.6" cy="144.4" r="3.2" fill="#5c665f"/><rect x="600.4" y="153" width="22.6" height="0.8" fill="#242424"/><path d="M606 156.5 H617" stroke="#444" stroke-width="1" stroke-dasharray="0.8 0.8"/><path d="M608.2 163.4 L616 167.6 L608.2 171.8 Z" fill="#c6c6c6"/><rect x="606.2" y="182.2" width="6" height="3.6" rx="1.8" fill="none" stroke="#c6c6c6" stroke-width="0.9"/><rect x="610.8" y="182.2" width="6" height="3.6" rx="1.8" fill="none" stroke="#c6c6c6" stroke-width="0.9"/><path d="M606.8 197.8 L609.6 196.2 L612.4 197.8 V201 L609.6 202.6 L606.8 201 Z M606.8 197.8 L609.6 199.4 L612.4 197.8 M609.6 199.4 V202.6" fill="none" stroke="#c6c6c6" stroke-width="0.7"/><g fill="#c6c6c6"><rect x="614" y="196" width="2.6" height="2.2"/><rect x="614" y="199.6" width="2.6" height="2.2"/><rect x="606.4" y="204.2" width="10.4" height="1.8"/></g><rect x="600.4" y="211.4" width="22.6" height="0.8" fill="#242424"/><path d="M606 214.6 H617" stroke="#444" stroke-width="1" stroke-dasharray="0.8 0.8"/><path d="M607.4 220.6 H613.2 L615.4 222.8 V230.6 H607.4 Z" fill="#c6c6c6"/><circle cx="611.4" cy="226.6" r="2" fill="#323232"/><rect x="611" y="225.2" width="0.8" height="2.6" fill="#c6c6c6"/><rect x="607.6" y="238.6" width="9" height="8.6" fill="#c6c6c6"/><circle cx="613" cy="241.6" r="2.6" fill="#323232"/><circle cx="607.8" cy="238.4" r="1.6" fill="#c6c6c6"/><rect x="600.4" y="253.6" width="22.6" height="0.8" fill="#242424"/><path d="M606 257 H617" stroke="#444" stroke-width="1" stroke-dasharray="0.8 0.8"/><path d="M606 264.4 L611.2 261.6 L616.4 264.4 L611.2 267.2 Z" fill="#c6c6c6"/><path d="M606.4 267.4 L611.2 270 L616 267.4" fill="none" stroke="#c6c6c6" stroke-width="1"/><rect x="600.4" y="277" width="22.6" height="0.8" fill="#242424"/><rect x="624" y="46.2" width="144" height="16.4" fill="#262626"/><rect x="624" y="46.2" width="39.6" height="16.4" fill="#323232"/><path d="M758.4 52.800000000000004 H765 M758.4 54.6 H765 M758.4 56.4 H765" stroke="#8e8e8e" stroke-width="0.7"/><rect x="627.2" y="66.7" width="10.6" height="11" fill="#fff"/><path d="M627.5 77.4 L637.5 67" stroke="#e0262a" stroke-width="1.1"/><rect x="633.4" y="72.4" width="11.2" height="11.6" fill="#2b2b2b" stroke="#1a1a1a" stroke-width="0.6"/><rect x="636.2" y="75.4" width="5.6" height="5.6" fill="#323232" stroke="#1a1a1a" stroke-width="0.6"/><path d="M739 69.6 H746.6 M739 72 H746.6 M739 74.4 H746.6 M739 76.8 H746.6" stroke="#c6c6c6" stroke-width="0.9"/><g fill="#c6c6c6"><rect x="753.6" y="68.8" width="2.3" height="2.3"/><rect x="753.6" y="71.9" width="2.3" height="2.3"/><rect x="753.6" y="75.0" width="2.3" height="2.3"/><rect x="756.7" y="68.8" width="2.3" height="2.3"/><rect x="756.7" y="71.9" width="2.3" height="2.3"/><rect x="756.7" y="75.0" width="2.3" height="2.3"/><rect x="759.8" y="68.8" width="2.3" height="2.3"/><rect x="759.8" y="71.9" width="2.3" height="2.3"/><rect x="759.8" y="75.0" width="2.3" height="2.3"/></g><defs><pattern id="p1" width="2" height="2" patternUnits="userSpaceOnUse"><rect width="2" height="2" fill="#e3212e"/><rect width="0.8" height="0.8" fill="#c01822"/></pattern><pattern id="p2" width="2" height="2" patternUnits="userSpaceOnUse"><rect width="2" height="2" fill="#e3212e"/><rect width="0.9" height="0.9" fill="#f6b21c"/></pattern><pattern id="p3" width="2" height="2" patternUnits="userSpaceOnUse"><rect width="2" height="2" fill="#f5a81c"/><rect width="0.9" height="0.9" fill="#e8531c"/></pattern></defs><rect x="627.3" y="88" width="16.1" height="15.8" fill="#fff"/><path d="M627.6 103.5 L643.1 88.3" stroke="#e0262a" stroke-width="1.1"/><rect x="643.9" y="88" width="16.1" height="15.8" fill="#f0f0f0"/><circle cx="652.0" cy="95.9" r="4.2" fill="none" stroke="#8a8a8a" stroke-width="0.7"/><circle cx="652.0" cy="95.9" r="2" fill="none" stroke="#9a9a9a" stroke-width="0.5"/><path d="M652.0 88.6 V103.2 M644.5 95.9 H659.3" stroke="#8a8a8a" stroke-width="0.6"/><rect x="660.5" y="88" width="16.1" height="15.8" fill="#ffffff"/><rect x="677.1" y="88" width="16.1" height="15.8" fill="#111111"/><rect x="693.7" y="88" width="16.1" height="15.8" fill="#e3212e"/><rect x="710.3" y="88" width="16.1" height="15.8" fill="#f6c31c"/><rect x="726.9" y="88" width="16.1" height="15.8" fill="#677068"/><rect x="627.3" y="104.4" width="16.1" height="14" fill="#3792ee"/><rect x="643.9" y="104.4" width="16.1" height="14" fill="#1d2f93"/><rect x="660.5" y="104.4" width="16.1" height="14" fill="#e3212e"/><rect x="677.1" y="104.4" width="16.1" height="14" fill="url(#p1)"/><rect x="693.7" y="104.4" width="16.1" height="14" fill="#e3212e"/><rect x="710.3" y="104.4" width="16.1" height="14" fill="url(#p2)"/><rect x="726.9" y="104.4" width="16.1" height="14" fill="url(#p3)"/><rect x="757.6" y="88" width="6" height="30.4" fill="#2a2a2a"/><path d="M759.2 92.2 L760.6 90.8 L762 92.2 M759.2 113.6 L760.6 115 L762 113.6" fill="none" stroke="#8a8a8a" stroke-width="0.6"/><path d="M631 122.4 V127.4 M632.8 122.4 V127.4 M634.4 122.6 L636 127.4" stroke="#a8a8a8" stroke-width="0.9"/><rect x="637" y="126.8" width="0.9" height="0.9" fill="#a8a8a8"/><path d="M650.4 123 L647.6 125 L650.4 127" fill="none" stroke="#a8a8a8" stroke-width="0.7"/><circle cx="650.6" cy="122.8" r="0.9" fill="#a8a8a8"/><circle cx="647.4" cy="125" r="0.9" fill="#a8a8a8"/><circle cx="650.6" cy="127.2" r="0.9" fill="#a8a8a8"/><rect x="662.4" y="122.4" width="4.4" height="4.4" fill="none" stroke="#5a5a5a" stroke-width="0.7"/><rect x="664.6" y="124.4" width="4.4" height="4.4" fill="none" stroke="#5a5a5a" stroke-width="0.7"/><rect x="682" y="122" width="6.4" height="6.4" fill="none" stroke="#a8a8a8" stroke-width="0.8"/><rect x="683.4" y="123.4" width="1.6" height="1.6" fill="#a8a8a8"/><rect x="685.6" y="123.4" width="1.6" height="1.6" fill="#a8a8a8"/><rect x="683.4" y="125.6" width="1.6" height="1.6" fill="#a8a8a8"/><rect x="690" y="127" width="0.9" height="0.9" fill="#a8a8a8"/><rect x="698.2" y="122.2" width="6.4" height="6" fill="none" stroke="#5a5a5a" stroke-width="0.7"/><path d="M700 125.2 h2.8" stroke="#5a5a5a" stroke-width="0.6"/><path d="M713.2 122.2 h3 l0.8 1 h4.2 v5 h-8 Z" fill="#a8a8a8"/><rect x="730.2" y="122.4" width="5.4" height="5.4" fill="none" stroke="#5a5a5a" stroke-width="0.7"/><path d="M733 124 v2.4 M731.8 125.2 h2.4" stroke="#5a5a5a" stroke-width="0.6"/><path d="M746 122.8 h5 M746.6 122.8 l0.4 5 h3 l0.4 -5 M747.8 122 h1.4" fill="none" stroke="#5a5a5a" stroke-width="0.7"/><rect x="624" y="130.6" width="144" height="1" fill="#1f1f1f"/><rect x="624" y="131.6" width="123" height="15.8" fill="#242424"/><rect x="624" y="131.6" width="43.2" height="15.8" fill="#323232"/><path d="M758.4 138.6 H765 M758.4 140.4 H765 M758.4 142.20000000000002 H765" stroke="#8e8e8e" stroke-width="0.7"/><path d="M627.4 139.8 L628.4 138.8 L629.4 139.8 M627.4 141.0 L628.4 142.0 L629.4 141.0" fill="none" stroke="#8e8e8e" stroke-width="0.5"/><path d="M626.4 183.4 H655" stroke="#3c3c3c" stroke-width="0.8" stroke-dasharray="0.8 0.8"/><rect x="627.3" y="153.5" width="136.2" height="10" rx="1" fill="#242424"/><path d="M757.1 157.8 L759.1 159.8 L761.1 157.8" fill="none" stroke="#c8c8c8" stroke-width="0.9"/><circle cx="631" cy="157.8" r="1.9" fill="none" stroke="#b8b8b8" stroke-width="0.7"/><path d="M629.7 159.3 L628.2 161" stroke="#b8b8b8" stroke-width="0.8"/><path d="M634 160 l0.9 0.9 l0.9 -0.9" fill="none" stroke="#b8b8b8" stroke-width="0.5"/><rect x="627.3" y="169.3" width="136.2" height="10" rx="1" fill="#242424"/><path d="M757.1 173.4 L759.1 175.4 L761.1 173.4" fill="none" stroke="#c8c8c8" stroke-width="0.9"/><rect x="640.2" y="188.8" width="9.1" height="10.2" rx="1" fill="#242424"/><path d="M643.0999999999999 192.3 L644.8 190.6 L646.5 192.3 M643.0999999999999 195.5 L644.8 197.20000000000002 L646.5 195.5" fill="none" stroke="#b4b4b4" stroke-width="0.8"/><rect x="650.8" y="188.8" width="29.3" height="10.2" rx="1" fill="#242424"/><rect x="681.7" y="188.8" width="9.2" height="10.2" rx="1" fill="#242424"/><path d="M684.3 193.0 L686.3 195.0 L688.3 193.0" fill="none" stroke="#c8c8c8" stroke-width="0.9"/><rect x="714" y="188.8" width="8.5" height="10.2" rx="1" fill="#242424"/><path d="M716.5 192.3 L718.2 190.6 L719.9000000000001 192.3 M716.5 195.5 L718.2 197.20000000000002 L719.9000000000001 195.5" fill="none" stroke="#b4b4b4" stroke-width="0.8"/><rect x="724" y="188.8" width="29" height="10.2" rx="1" fill="#242424"/><rect x="754.9" y="188.8" width="8.6" height="10.2" rx="1" fill="#242424"/><path d="M757.2 193.0 L759.2 195.0 L761.2 193.0" fill="none" stroke="#c8c8c8" stroke-width="0.9"/><rect x="640.2" y="203.8" width="9.1" height="10.2" rx="1" fill="#242424"/><path d="M643.0999999999999 207.3 L644.8 205.6 L646.5 207.3 M643.0999999999999 210.5 L644.8 212.20000000000002 L646.5 210.5" fill="none" stroke="#b4b4b4" stroke-width="0.8"/><rect x="650.8" y="203.8" width="29.3" height="10.2" rx="1" fill="#242424"/><rect x="681.7" y="203.8" width="9.2" height="10.2" rx="1" fill="#242424"/><path d="M684.3 208.0 L686.3 210.0 L688.3 208.0" fill="none" stroke="#c8c8c8" stroke-width="0.9"/><rect x="714" y="203.8" width="8.5" height="10.2" rx="1" fill="#242424"/><path d="M716.5 207.3 L718.2 205.6 L719.9000000000001 207.3 M716.5 210.5 L718.2 212.20000000000002 L719.9000000000001 210.5" fill="none" stroke="#b4b4b4" stroke-width="0.8"/><rect x="724" y="203.8" width="29" height="10.2" rx="1" fill="#242424"/><rect x="754.9" y="203.8" width="8.6" height="10.2" rx="1" fill="#242424"/><path d="M757.2 208.0 L759.2 210.0 L761.2 208.0" fill="none" stroke="#c8c8c8" stroke-width="0.9"/><rect x="640.2" y="223.5" width="9.1" height="10.2" rx="1" fill="#242424"/><path d="M643.0999999999999 227.0 L644.8 225.29999999999998 L646.5 227.0 M643.0999999999999 230.2 L644.8 231.9 L646.5 230.2" fill="none" stroke="#b4b4b4" stroke-width="0.8"/><rect x="650.8" y="223.5" width="29.3" height="10.2" rx="1" fill="#242424"/><rect x="681.7" y="223.5" width="9.2" height="10.2" rx="1" fill="#242424"/><path d="M684.3 227.7 L686.3 229.7 L688.3 227.7" fill="none" stroke="#c8c8c8" stroke-width="0.9"/><rect x="714" y="223.5" width="8.5" height="10.2" rx="1" fill="#242424"/><path d="M716.5 227.0 L718.2 225.29999999999998 L719.9000000000001 227.0 M716.5 230.2 L718.2 231.9 L719.9000000000001 230.2" fill="none" stroke="#b4b4b4" stroke-width="0.8"/><rect x="724" y="223.5" width="29" height="10.2" rx="1" fill="#242424"/><rect x="754.9" y="223.5" width="8.6" height="10.2" rx="1" fill="#242424"/><path d="M757.2 227.7 L759.2 229.7 L761.2 227.7" fill="none" stroke="#c8c8c8" stroke-width="0.9"/><rect x="640.2" y="239.4" width="9.1" height="10.2" rx="1" fill="#242424"/><path d="M643.0999999999999 242.9 L644.8 241.2 L646.5 242.9 M643.0999999999999 246.1 L644.8 247.8 L646.5 246.1" fill="none" stroke="#b4b4b4" stroke-width="0.8"/><rect x="650.8" y="239.4" width="29.3" height="10.2" rx="1" fill="#242424"/><rect x="681.7" y="239.4" width="9.2" height="10.2" rx="1" fill="#242424"/><path d="M684.3 243.6 L686.3 245.6 L688.3 243.6" fill="none" stroke="#c8c8c8" stroke-width="0.9"/><rect x="714" y="239.4" width="8.5" height="10.2" rx="1" fill="#242424"/><path d="M716.5 242.9 L718.2 241.2 L719.9000000000001 242.9 M716.5 246.1 L718.2 247.8 L719.9000000000001 246.1" fill="none" stroke="#b4b4b4" stroke-width="0.8"/><rect x="724" y="239.4" width="29" height="10.2" rx="1" fill="#242424"/><rect x="754.9" y="239.4" width="8.6" height="10.2" rx="1" fill="#242424"/><path d="M757.2 243.6 L759.2 245.6 L761.2 243.6" fill="none" stroke="#c8c8c8" stroke-width="0.9"/><path d="M701.6 191 v6 M700.4 192.4 l1.2 -1.4 l1.2 1.4 M700.4 195.6 l1.2 1.4 l1.2 -1.4" fill="none" stroke="#c6c6c6" stroke-width="0.6"/><path d="M703.6 198.8 H710.6" stroke="#c6c6c6" stroke-width="0.6"/><path d="M630.6 215.6 h4 M631.8 214.6 l-1.2 1 l1.2 1" fill="none" stroke="#c6c6c6" stroke-width="0.6"/><rect x="700.2" y="204.4" width="10.6" height="6.6" fill="#c6c6c6"/><path d="M700.4 213.4 H710.6 M701.6 212.4 l-1.2 1 l1.2 1 M709.4 212.4 l1.2 1 l-1.2 1" fill="none" stroke="#c6c6c6" stroke-width="0.6"/><path d="M628.2 224.4 V233 M627 225.8 l1.2 -1.4 l1.2 1.4 M627 231.6 l1.2 1.4 l1.2 -1.4" fill="none" stroke="#c6c6c6" stroke-width="0.6"/><path d="M700.4 234.6 H710.6 M701.8 233.4 l-1.4 1.2 l1.4 1.2 M709.2 233.4 l1.4 1.2 l-1.4 1.2" fill="none" stroke="#c6c6c6" stroke-width="0.6"/><path d="M635.4 241 V248.4 M634.2 242.4 l1.2 -1.4 l1.2 1.4 M634.2 247 l1.2 1.4 l1.2 -1.4" fill="none" stroke="#c6c6c6" stroke-width="0.5"/><path d="M627 248.6 H633.6" stroke="#c6c6c6" stroke-width="0.5"/><circle cx="705.4" cy="244.4" r="4.5" fill="none" stroke="#c6c6c6" stroke-width="0.7"/><rect x="628.1" y="274.8" width="53.9" height="10.2" rx="1" fill="#242424"/><path d="M675.2 279 L677.2 281 L679.2 279" fill="none" stroke="#c8c8c8" stroke-width="0.9"/><rect x="709.6" y="274.8" width="53.9" height="10.2" rx="1" fill="#242424"/><path d="M757.1 279 L759.1 281 L761.1 279" fill="none" stroke="#c8c8c8" stroke-width="0.9"/><rect x="624" y="289.4" width="144" height="1.4" fill="#1f1f1f"/><rect x="624" y="290.8" width="144" height="16.4" fill="#242424"/><rect x="624" y="290.8" width="45.1" height="16.4" fill="#323232"/><path d="M627.4 298.5 L628.4 297.5 L629.4 298.5 M627.4 299.70000000000005 L628.4 300.70000000000005 L629.4 299.70000000000005" fill="none" stroke="#8e8e8e" stroke-width="0.5"/><path d="M758.4 297.3 H765 M758.4 299.1 H765 M758.4 300.90000000000003 H765" stroke="#8e8e8e" stroke-width="0.7"/><rect x="624" y="307.2" width="144" height="1.9" fill="#1f1f1f"/><rect x="624" y="309.1" width="144" height="16.4" fill="#242424"/><rect x="624" y="309.1" width="42.2" height="16.4" fill="#323232"/><path d="M758.4 315.5 H765 M758.4 317.3 H765 M758.4 319.1 H765" stroke="#8e8e8e" stroke-width="0.7"/><rect x="624" y="325.5" width="144" height="1.9" fill="#1f1f1f"/><rect x="624" y="327.4" width="144" height="16.4" fill="#242424"/><rect x="624" y="327.4" width="43.2" height="16.4" fill="#2a2a2a"/><rect x="667.2" y="327.4" width="29.5" height="16.4" fill="#323232"/><path d="M670.6 335.5 L671.6 334.5 L672.6 335.5 M670.6 336.70000000000005 L671.6 337.70000000000005 L672.6 336.70000000000005" fill="none" stroke="#8e8e8e" stroke-width="0.5"/><path d="M758.4 334.3 H765 M758.4 336.1 H765 M758.4 337.90000000000003 H765" stroke="#8e8e8e" stroke-width="0.7"/><path d="M629.9 361.8 V372.2" stroke="#c4c4c4" stroke-width="0.8"/><rect x="630.9" y="363.2" width="5" height="3.2" fill="#c4c4c4"/><rect x="630.9" y="367.6" width="8.6" height="3.2" fill="#c4c4c4"/><path d="M655.9 361.8 V372.2" stroke="#c4c4c4" stroke-width="0.8"/><rect x="653.3" y="363.2" width="5.2" height="3.2" fill="#c4c4c4"/><rect x="651.8" y="367.6" width="8.2" height="3.2" fill="#c4c4c4"/><path d="M683 361.8 V372.2" stroke="#c4c4c4" stroke-width="0.8"/><rect x="677" y="363.2" width="5" height="3.2" fill="#c4c4c4"/><rect x="673.2" y="367.6" width="8.8" height="3.2" fill="#c4c4c4"/><path d="M708.6 362.4 H719.8000000000001" stroke="#c4c4c4" stroke-width="0.8"/><rect x="710.4000000000001" y="363.4" width="3.2" height="9" fill="#c4c4c4"/><rect x="714.8000000000001" y="363.4" width="3.2" height="5" fill="#c4c4c4"/><path d="M730.1999999999999 367 H741.4" stroke="#c4c4c4" stroke-width="0.8"/><rect x="732.0" y="362.6" width="3.2" height="8.8" fill="#c4c4c4"/><rect x="736.4" y="364.4" width="3.2" height="5.2" fill="#c4c4c4"/><path d="M751.9 372 H763.1" stroke="#c4c4c4" stroke-width="0.8"/><rect x="753.7" y="362" width="3.2" height="9" fill="#c4c4c4"/><rect x="758.1" y="366" width="3.2" height="5" fill="#c4c4c4"/><path d="M629.2 397.70000000000005 H640.2 M629.2 402.90000000000003 H640.2" stroke="#c4c4c4" stroke-width="0.7"/><rect x="630.9000000000001" y="398.3" width="7.6" height="3" fill="#c4c4c4"/><rect x="631.9000000000001" y="403.5" width="5.6" height="3.4" fill="#c4c4c4"/><path d="M650.6 399.5 H661.6 M650.6 404.70000000000005 H661.6" stroke="#c4c4c4" stroke-width="0.7"/><rect x="652.3000000000001" y="397.90000000000003" width="7.6" height="3.2" fill="#c4c4c4"/><rect x="653.3000000000001" y="403.1" width="5.6" height="3.2" fill="#c4c4c4"/><path d="M672.5 401.5 H683.5 M672.5 406.90000000000003 H683.5" stroke="#c4c4c4" stroke-width="0.7"/><rect x="675.2" y="397.90000000000003" width="5.6" height="3" fill="#c4c4c4"/><rect x="674.2" y="403.3" width="7.6" height="3" fill="#c4c4c4"/><path d="M709.6 396.8 V407.40000000000003 M715.0 396.8 V407.40000000000003" stroke="#c4c4c4" stroke-width="0.7"/><rect x="710.2" y="398.3" width="3.2" height="7.6" fill="#c4c4c4"/><rect x="715.6" y="399.3" width="3.2" height="5.6" fill="#c4c4c4"/><path d="M733.3 396.8 V407.40000000000003 M738.5 396.8 V407.40000000000003" stroke="#c4c4c4" stroke-width="0.7"/><rect x="731.6999999999999" y="398.3" width="3.2" height="7.6" fill="#c4c4c4"/><rect x="736.9" y="399.3" width="3.2" height="5.6" fill="#c4c4c4"/><path d="M756.7 396.8 V407.40000000000003 M762.3 396.8 V407.40000000000003" stroke="#c4c4c4" stroke-width="0.7"/><rect x="753.3" y="399.3" width="3" height="5.6" fill="#c4c4c4"/><rect x="758.7" y="398.3" width="3.2" height="7.6" fill="#c4c4c4"/><rect x="633.4" y="431.8" width="5.8" height="3.4" fill="#c4c4c4"/><rect x="631.8" y="438" width="7.5" height="3.4" fill="#c4c4c4"/><path d="M629.2 436.6 h2.6 M630.5 435.3 v2.6" stroke="#c4c4c4" stroke-width="0.6"/><rect x="649" y="432.6" width="3.2" height="8.6" fill="#c4c4c4"/><rect x="654.2" y="434.2" width="3.2" height="5.6" fill="#c4c4c4"/><path d="M651.8 431.2 h3 M653.3 430 v2.4" stroke="#c4c4c4" stroke-width="0.6"/><rect x="664.7" y="431" width="49.7" height="11.6" rx="1.2" fill="#2c2c2c"/><path d="M667.9 435.2 L669.6 433.5 L671.3 435.2 M667.9 438.4 L669.6 440.1 L671.3 438.4" fill="none" stroke="#4a4a4a" stroke-width="0.8"/><g fill="#c4c4c4"><rect x="743.0" y="432.6" width="1.4" height="1.4"/><rect x="743.0" y="436.0" width="1.4" height="1.4"/><rect x="743.0" y="439.4" width="1.4" height="1.4"/><rect x="746.4" y="432.6" width="1.4" height="1.4"/><rect x="746.4" y="436.0" width="1.4" height="1.4"/><rect x="746.4" y="439.4" width="1.4" height="1.4"/><rect x="749.8" y="432.6" width="1.4" height="1.4"/><rect x="749.8" y="436.0" width="1.4" height="1.4"/><rect x="749.8" y="439.4" width="1.4" height="1.4"/></g><path d="M753 436 L755 438 L757 436" fill="none" stroke="#a8a8a8" stroke-width="0.9"/><rect x="600" y="446" width="168" height="3" fill="#1f1f1f"/></svg>
<div class="t" style="left:634.2px;top:72.60000000000001px;font-size:3.6px;color:#c8c8c8">?</div>
<div class="t" style="left:642px;top:72.60000000000001px;font-size:3.6px;color:#c8c8c8">?</div>
<div class="t" style="left:634.2px;top:80.4px;font-size:3.6px;color:#c8c8c8">?</div>
<div class="t" style="left:642px;top:80.4px;font-size:3.6px;color:#c8c8c8">?</div>
<div class="t " style="left:628.9px;top:51.05px;font-size:7.3px;color:#f0f0f0;font-weight:bold;transform:scaleX(0.843);">Swatches</div>
<div class="t " style="left:633.1px;top:136.85px;font-size:7.3px;color:#f0f0f0;font-weight:bold;transform:scaleX(0.848);">Character</div>
<div class="t " style="left:673px;top:136.85px;font-size:7.3px;color:#a4a4a4;font-weight:normal;transform:scaleX(0.926);">OpenType</div>
<div class="t " style="left:714.4px;top:136.85px;font-size:7.3px;color:#a4a4a4;font-weight:normal;transform:scaleX(0.943);">Gradient</div>
<div class="t " style="left:643.1px;top:155.25px;font-size:7.1px;color:#d0d0d0;font-weight:normal;transform:scaleX(0.900);">Myriad Pro</div>
<div class="t " style="left:630.6px;top:170.75px;font-size:7.1px;color:#d0d0d0;font-weight:normal;transform:scaleX(0.893);">Regular</div>
<div class="t " style="left:653.1px;top:190.70px;font-size:6.8px;color:#c0c0c0;font-weight:normal;transform:scaleX(0.932);">12 pt</div>
<div class="t " style="left:725.6px;top:190.70px;font-size:6.8px;color:#c0c0c0;font-weight:normal;transform:scaleX(1.003);">(14.4 pt)</div>
<div class="t " style="left:653.1px;top:205.70px;font-size:6.8px;color:#c0c0c0;font-weight:normal;transform:scaleX(0.915);">Auto</div>
<div class="t " style="left:726px;top:205.70px;font-size:6.8px;color:#c0c0c0;font-weight:normal;transform:scaleX(0.952);">0</div>
<div class="t " style="left:653.1px;top:226.20px;font-size:6.8px;color:#c0c0c0;font-weight:normal;transform:scaleX(0.811);">100%</div>
<div class="t " style="left:726.6px;top:226.20px;font-size:6.8px;color:#c0c0c0;font-weight:normal;transform:scaleX(0.828);">100%</div>
<div class="t " style="left:652.8px;top:241.90px;font-size:6.8px;color:#c0c0c0;font-weight:normal;transform:scaleX(0.935);">0 pt</div>
<div class="t " style="left:726px;top:241.90px;font-size:6.8px;color:#c0c0c0;font-weight:normal;transform:scaleX(0.892);">0&deg;</div>
<div class="t " style="left:630.6px;top:276.55px;font-size:6.9px;color:#d4d4d4;font-weight:normal;transform:scaleX(0.900);">English: USA</div>
<div class="t " style="left:633.1px;top:295.55px;font-size:7.3px;color:#f0f0f0;font-weight:bold;transform:scaleX(0.864);">Paragraph</div>
<div class="t " style="left:629.2px;top:313.65px;font-size:7.3px;color:#f0f0f0;font-weight:bold;transform:scaleX(0.875);">Pathfinder</div>
<div class="t " style="left:629.6px;top:332.55px;font-size:7.3px;color:#8e8e8e;font-weight:normal;transform:scaleX(0.964);">Transform</div>
<div class="t " style="left:675.9px;top:332.55px;font-size:7.3px;color:#f0f0f0;font-weight:bold;transform:scaleX(0.899);">Align</div>
<div class="t " style="left:627.3px;top:350.15px;font-size:7.1px;color:#b4b4b4;font-weight:normal;transform:scaleX(0.902);">Align Objects:</div>
<div class="t " style="left:627.3px;top:384.65px;font-size:7.1px;color:#b4b4b4;font-weight:normal;transform:scaleX(0.931);">Distribute Objects:</div>
<div class="t " style="left:627.3px;top:419.45px;font-size:7.1px;color:#b4b4b4;font-weight:normal;transform:scaleX(0.913);">Distribute Spacing:</div>
<div class="t " style="left:739.1px;top:419.45px;font-size:7.1px;color:#b4b4b4;font-weight:normal;transform:scaleX(0.952);">Align To:</div>
<div class="t " style="left:626.8px;top:192.60px;font-size:5.6px;color:#c6c6c6;font-weight:bold;font-family:'Liberation Serif',serif;">T</div>
<div class="t " style="left:630.4px;top:188.60px;font-size:10.4px;color:#c6c6c6;font-weight:bold;font-family:'Liberation Serif',serif;">T</div>
<div class="t " style="left:704.6px;top:189.30px;font-size:4.6px;color:#c6c6c6;font-weight:bold;font-family:'Liberation Serif',serif;">A</div>
<div class="t " style="left:704.2px;top:193.60px;font-size:5.6px;color:#c6c6c6;font-weight:bold;font-family:'Liberation Serif',serif;">A</div>
<div class="t " style="left:627px;top:204.70px;font-size:7.4px;color:#c6c6c6;font-weight:bold;font-family:'Liberation Serif',serif;">V</div>
<div class="t " style="left:631px;top:206.50px;font-size:7.4px;color:#c6c6c6;font-weight:bold;font-family:'Liberation Serif',serif;">A</div>
<div class="t " style="left:701.2px;top:204.80px;font-size:6px;color:#2a2a2a;font-weight:bold;letter-spacing:-0.2px">VA</div>
<div class="t " style="left:630.6px;top:223.40px;font-size:10.4px;color:#c6c6c6;font-weight:bold;font-family:'Liberation Serif',serif;">T</div>
<div class="t " style="left:702.2px;top:222.80px;font-size:10px;color:#c6c6c6;font-weight:bold;font-family:'Liberation Serif',serif;">T</div>
<div class="t " style="left:626.8px;top:241.70px;font-size:6.6px;color:#c6c6c6;font-weight:bold;font-family:'Liberation Serif',serif;">A</div>
<div class="t " style="left:631px;top:240.80px;font-size:5.2px;color:#c6c6c6;font-weight:bold;font-family:'Liberation Serif',serif;">a</div>
<div class="t " style="left:703.6px;top:241.40px;font-size:6.4px;color:#c6c6c6;font-weight:bold;font-family:'Liberation Serif',serif;">T</div>
<div class="t " style="left:629.2px;top:257.90px;font-size:9px;color:#c6c6c6;font-weight:bold;font-family:'Liberation Serif',serif;letter-spacing:0.2px">TT</div>
<div class="t " style="left:648px;top:257.90px;font-size:9px;color:#c6c6c6;font-weight:bold;font-family:'Liberation Serif',serif;">T</div>
<div class="t " style="left:653px;top:260.30px;font-size:6.6px;color:#c6c6c6;font-weight:bold;font-family:'Liberation Serif',serif;">T</div>
<div class="t " style="left:683.6px;top:258.10px;font-size:9px;color:#c6c6c6;font-weight:bold;font-family:'Liberation Serif',serif;">T</div>
<div class="t " style="left:689.6px;top:257.90px;font-size:3.8px;color:#c6c6c6;font-weight:bold;font-family:'Liberation Serif',serif;">1</div>
<div class="t " style="left:701px;top:258.10px;font-size:9px;color:#c6c6c6;font-weight:bold;font-family:'Liberation Serif',serif;">T</div>
<div class="t " style="left:706.8px;top:263.70px;font-size:3.8px;color:#c6c6c6;font-weight:bold;font-family:'Liberation Serif',serif;">1</div>
<div class="t " style="left:737.3px;top:257.90px;font-size:9px;color:#c6c6c6;font-weight:bold;font-family:'Liberation Serif',serif;text-decoration:underline">T</div>
<div class="t " style="left:755.2px;top:257.90px;font-size:9px;color:#c6c6c6;font-weight:bold;font-family:'Liberation Serif',serif;text-decoration:line-through">T</div>
<div class="t " style="left:696.1px;top:277.20px;font-size:6px;color:#a8a8a8;font-weight:normal;">a</div>
<div class="t " style="left:699.6px;top:277.40px;font-size:7.6px;color:#a8a8a8;font-weight:normal;">a</div>
<svg width="768" height="449"><rect x="48.3" y="439" width="29.2" height="10" fill="#222"/><rect x="78.5" y="439" width="8.4" height="10" fill="#222"/><rect x="115" y="439" width="23" height="10" fill="#222"/><rect x="139" y="439" width="8" height="10" fill="#222"/><path d="M81.1 443.2 L83.1 445.2 L85.1 443.2 M140.8 443.2 L142.8 445.2 L144.8 443.2" fill="none" stroke="#c8c8c8" stroke-width="0.9"/><path d="M98.4 442.0 L95.8 444.2 L98.4 446.4 Z M108 442.0 L105.4 444.2 L108 446.4 Z M154.4 442.0 L157 444.2 L154.4 446.4 Z M164.4 442.0 L167 444.2 L164.4 446.4 Z" fill="#5a5a5a"/><path d="M95 442.0 V446.4 M168 442.0 V446.4" stroke="#5a5a5a" stroke-width="0.8"/><path d="M297.8 441.8 L300.6 444.2 L297.8 446.59999999999997 Z" fill="#c4c4c4"/><rect x="304.6" y="438" width="284" height="11" fill="#272727"/><path d="M310.2 442.4 L308.4 444.2 L310.2 446.0 M582 442.4 L583.8 444.2 L582 446.0" fill="none" stroke="#6a6a6a" stroke-width="0.7"/><rect x="439.6" y="440.8" width="15" height="6.8" rx="3.4" fill="#3c3c3c"/><path d="M591.2 63 L593 61.2 L594.8 63 M591.2 431.8 L593 433.6 L594.8 431.8" fill="none" stroke="#7a7a7a" stroke-width="0.7"/><rect x="588.5" y="437.3" width="11.5" height="12" fill="#2b2b2b"/></svg>
<div class="t " style="left:50.4px;top:440.90px;font-size:7px;color:#c4c4c4;font-weight:normal;transform:scaleX(0.880);">43.53%</div>
<div class="t " style="left:117.7px;top:440.90px;font-size:7px;color:#d0d0d0;font-weight:normal;">1</div>
<div class="t " style="left:220.7px;top:440.80px;font-size:6.8px;color:#b0b0b0;font-weight:normal;transform:scaleX(0.929);">Selection</div>
<div class="a" style="left:286.2px;top:240.7px;width:117.7px;height:187.6px;background:#eeeeee;border-radius:4.5px;box-shadow:0 0 0 0.6px rgba(120,120,130,0.55),0 3px 8px rgba(0,0,0,0.28);overflow:hidden"><div class="mi" style="top:4.30px;color:#1d1d1d">Undo Group</div><div class="mi" style="top:16.00px;color:#a4a4a4">Redo</div><div class="sep" style="top:28.10px"></div><div class="mi" style="top:34.30px;color:#1d1d1d">Make Pixel Perfect</div><div class="sep" style="top:46.30px"></div><div class="mi" style="top:52.70px;color:#1d1d1d">Perspective</div><div class="arr" style="top:53.00px"></div><div class="sep" style="top:64.80px"></div><div class="mi" style="top:71.30px;color:#1d1d1d">Simplify...</div><div class="sep" style="top:83.60px"></div><div class="a" style="left:0;right:0;top:87.60000000000002px;height:11.2px;background:#3d8bf2"></div><div class="mi" style="top:90.00px;color:#ffffff">Group</div><div class="mi" style="top:101.30px;color:#1d1d1d">Ungroup</div><div class="sep" style="top:113.50px"></div><div class="mi" style="top:119.70px;color:#1d1d1d">Transform</div><div class="arr" style="top:120.00px"></div><div class="mi" style="top:131.00px;color:#1d1d1d">Arrange</div><div class="arr" style="top:131.30px"></div><div class="mi" style="top:142.30px;color:#1d1d1d">Select</div><div class="arr" style="top:142.60px"></div><div class="mi" style="top:153.70px;color:#1d1d1d">Add to Library</div><div class="mi" style="top:165.00px;color:#1d1d1d">Collect For Export</div><div class="arr" style="top:165.30px"></div><div class="mi" style="top:176.30px;color:#1d1d1d">Export Selection...</div></div><svg width="768" height="449"><path d="M305.6 335 L305.6 342.9 L307.4 341.3 L308.7 344.2 L309.9 343.7 L308.7 340.9 L311.1 340.8 Z" fill="#111" stroke="#fff" stroke-width="0.7" stroke-linejoin="round"/></svg>
</div></body></html>
